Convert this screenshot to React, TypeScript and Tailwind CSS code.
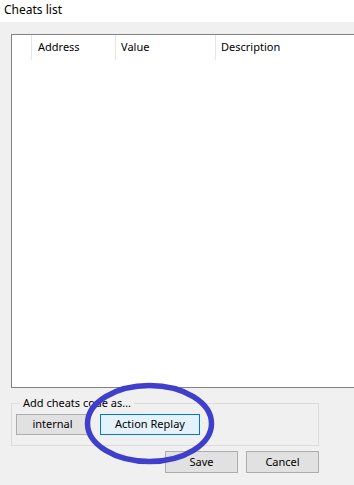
import React from "react";

const font = { fontFamily: '"Noto Sans", "Liberation Sans", sans-serif' };

export default function App() {
  return (
    <div
      className="relative w-[354px] h-[485px] overflow-hidden bg-[#f0f0f0] text-[11px] text-black"
      style={font}
    >
      <div className="h-[22px] bg-white pl-[4px] pb-[3px] flex items-center leading-none">
        <span className="text-[12px]">Cheats list</span>
      </div>
      <div className="ml-[11px] mt-[12px] w-[360px] h-[354px] border border-[#828282] bg-white">
        <div className="flex h-[25px] items-stretch">
          <div className="w-[20px] h-[25px] border-r border-[#e5e5e5]" />
          <div className="w-[84px] h-[25px] border-r border-[#e5e5e5] pl-[6px] flex items-center">Address</div>
          <div className="w-[100px] h-[25px] border-r border-[#e5e5e5] pl-[5px] flex items-center">Value</div>
          <div className="flex-1 pl-[5px] flex items-center">Description</div>
        </div>
      </div>
      <div className="relative ml-[11px] mt-[15px] w-[308px] h-[43px] border border-[#dcdcdc]">
        <div className="absolute left-[8px] top-[-10px] px-[3px] bg-[#f0f0f0] leading-[18px]">
          Add cheats code as…
        </div>
        <div className="flex gap-[11px] pl-[4px] pt-[10px]">
          <div className="w-[73px] h-[21px] border border-[#adadad] bg-[#e1e1e1] flex items-center justify-center">
            internal
          </div>
          <div className="w-[100px] h-[21px] border border-[#0078d7] bg-[#e5f1fb] flex items-center justify-center">
            Action Replay
          </div>
        </div>
      </div>
      <div className="w-[319px] flex justify-end gap-[8px] mt-[5px]">
        <div className="w-[73px] h-[22px] border border-[#adadad] bg-[#e1e1e1] flex items-center justify-center">
          Save
        </div>
        <div className="w-[73px] h-[22px] border border-[#adadad] bg-[#e1e1e1] flex items-center justify-center">
          Cancel
        </div>
      </div>
      <svg
        className="absolute left-[83px] top-[381px]"
        width="134"
        height="86"
        viewBox="0 0 134 86"
      >
        <ellipse cx="66.5" cy="42.5" rx="62" ry="38" fill="none" stroke="#3f3fcc" strokeWidth="5.5" />
      </svg>
    </div>
  );
}
